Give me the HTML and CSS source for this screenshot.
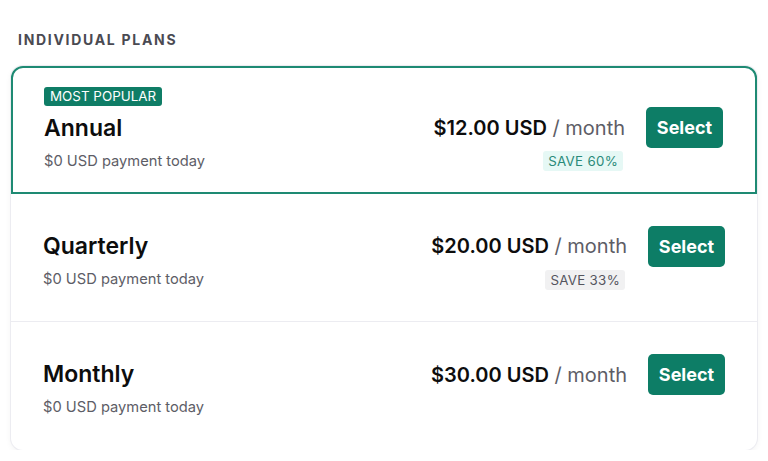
FILE: index.html
```html
<!DOCTYPE html>
<html lang="en">
<head>
    <meta charset="UTF-8">
    <meta name="viewport" content="width=device-width, initial-scale=1.0">
    <title>Individual Plans</title>
    <link rel="stylesheet" href="styles.css">
</head>
<body>

<div class="section-title">Individual plans</div>

<div class="plans">
    <div class="plan selected">
        <div class="plan-info">
            <span class="popular">MOST POPULAR</span>
            <div class="plan-name">Annual</div>
            <div class="plan-sub">$0 USD payment today</div>
        </div>
        <div class="plan-right">
            <div class="price-col">
                <div class="price"><b>$12.00 USD</b> / month</div>
                <span class="save green">SAVE 60%</span>
            </div>
            <button class="select-btn">Select</button>
        </div>
    </div>

    <div class="plan">
        <div class="plan-info">
            <div class="plan-name">Quarterly</div>
            <div class="plan-sub">$0 USD payment today</div>
        </div>
        <div class="plan-right">
            <div class="price-col">
                <div class="price"><b>$20.00 USD</b> / month</div>
                <span class="save">SAVE 33%</span>
            </div>
            <button class="select-btn">Select</button>
        </div>
    </div>

    <div class="plan">
        <div class="plan-info">
            <div class="plan-name">Monthly</div>
            <div class="plan-sub">$0 USD payment today</div>
        </div>
        <div class="plan-right">
            <div class="price-col">
                <div class="price"><b>$30.00 USD</b> / month</div>
            </div>
            <button class="select-btn">Select</button>
        </div>
    </div>
</div>

</body>
</html>
```

FILE: styles.css
```css
body {
    margin: 0;
    background: #fff;
    font-family: Inter, "Noto Sans", sans-serif;
    color: #0d0d0d;
}
.section-title {
    margin: 32px 0 0 18px;
    font-size: 14px;
    font-weight: 700;
    letter-spacing: 1.7px;
    text-transform: uppercase;
    color: #4a4a52;
    line-height: 16px;
}
.plans {
    margin: 18px 0 0 11px;
    width: 746px;
    border-radius: 12px;
    box-shadow: 0 0 0 1px #ececf1, 0 2px 6px rgba(0, 0, 0, 0.06);
    background: #fff;
}
.plan {
    height: 128px;
    box-sizing: border-box;
    padding: 0 32px;
    display: flex;
    justify-content: space-between;
    align-items: center;
    border-bottom: 1px solid #ececf1;
}
.plan:last-child {
    border-bottom: none;
}
.plan.selected {
    border: 2px solid #1e8a73;
    border-radius: 12px 12px 0 0;
    padding: 18px 32px 0 31px;
}
.plan-info {
    position: relative;
    padding-top: 5px;
}
.selected .plan-info {
    padding-top: 7px;
}
.popular {
    position: absolute;
    top: -20px;
    left: 0;
    background: #0f7d66;
    color: #fff;
    font-size: 13.4px;
    line-height: 19px;
    padding: 0 6px;
    border-radius: 3px;
    white-space: nowrap;
}
.plan-name {
    font-size: 23px;
    font-weight: 600;
    line-height: 28px;
}
.plan-sub {
    margin-top: 9px;
    font-size: 14.7px;
    line-height: 20px;
    color: #5d5d66;
}
.plan-right {
    display: flex;
    align-items: flex-start;
    gap: 21px;
}
.price-col {
    min-height: 64px;
    display: flex;
    flex-direction: column;
    align-items: flex-end;
}
.price {
    height: 41px;
    display: flex;
    align-items: center;
    font-size: 20px;
    color: #5d5d66;
    white-space: pre;
}
.price b {
    color: #0d0d0d;
    font-weight: 600;
}
.save {
    margin: 3px 2px 0 0;
    font-size: 13.3px;
    line-height: 20px;
    letter-spacing: 0.3px;
    padding: 0 5px;
    border-radius: 3px;
    background: #f1f1f2;
    color: #55555e;
}
.save.green {
    background: #e6f8f5;
    color: #2a8a79;
}
.select-btn {
    width: 77px;
    height: 41px;
    border: none;
    border-radius: 5px;
    background: #0d7d66;
    color: #fff;
    font-family: inherit;
    font-size: 18px;
    font-weight: 700;
    cursor: pointer;
}
```
